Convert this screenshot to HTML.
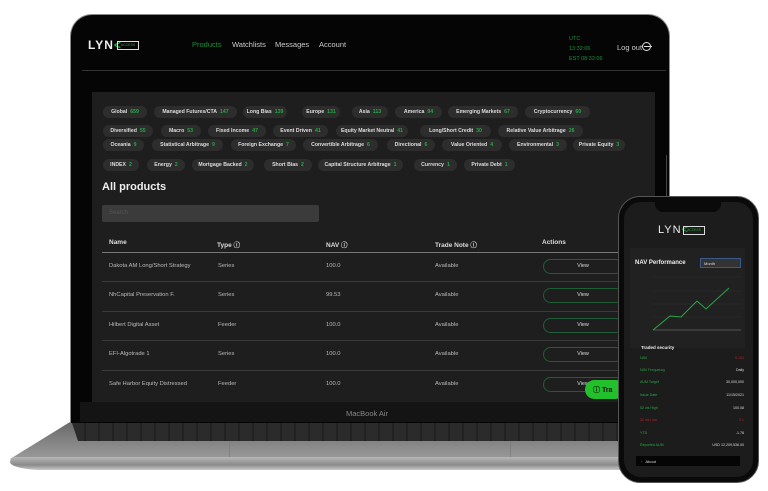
<!DOCTYPE html>
<html><head><meta charset="utf-8"><style>
*{box-sizing:border-box;margin:0;padding:0}
body{width:768px;height:491px;background:#fff;position:relative;overflow:hidden;font-family:"Liberation Sans",sans-serif}
.abs{position:absolute}
.lid{left:70px;top:14px;width:600px;height:409px;background:#050505;border-radius:22px 22px 0 0;border:1.5px solid #8a8a8a;border-bottom:none}
.chip{position:absolute;height:12px;border-radius:6px;background:#2d2d2d;color:#ddd;font-size:5.2px;font-weight:bold;line-height:12px;white-space:nowrap;text-align:center;overflow:hidden}
.chip b{color:#2aa845;margin-left:3px}
.nav{font-size:7.5px;color:#ccc}
.th{position:absolute;top:239px;font-size:6.5px;font-weight:bold;color:#ddd}
.td{position:absolute;font-size:5.8px;color:#bbb}
.row{position:absolute;left:102px;width:553px;height:1px;background:#3a3a3a}
.view{position:absolute;left:543px;width:80px;height:15px;border:1px solid #1f5e37;border-radius:8px;color:#ddd;font-size:5.5px;text-align:center;line-height:13px}
.pr{position:absolute;left:640px;font-size:3.6px;color:#2aa845}
.pv{position:absolute;right:24px;font-size:3.6px;color:#ddd}
</style></head><body>
<!-- base deck -->
<div class="abs" style="left:10px;top:422px;width:720px;height:37px;background:linear-gradient(#6a6a6a,#9a9a9a);clip-path:polygon(60px 0,660px 0,720px 37px,0 37px)"></div>
<div class="abs" style="left:72px;top:423px;width:596px;height:18px;background:repeating-linear-gradient(90deg,#2b2b2b 0 12px,#222 12px 14px);clip-path:polygon(0 0,596px 0,590px 18px,6px 18px)"></div>
<div class="abs" style="left:229px;top:441px;width:282px;height:17px;border-left:1px solid #777;border-right:1px solid #777;opacity:.6"></div>
<div class="abs" style="left:10px;top:457px;width:720px;height:13px;background:linear-gradient(#b8b8b8,#8a8a8a 60%,#c8c8c8);border-radius:6px 6px 40px 40px/6px 6px 10px 10px"></div>
<div class="abs lid"></div>
<!-- header -->
<div class="abs" style="left:88px;top:38px;font-size:12px;color:#eee;font-weight:bold;letter-spacing:1px">LYN<span style="color:#2aa845">&lt;</span></div>
<div class="abs" style="left:117px;top:41px;width:22px;height:9px;border:1px solid #ddd;font-size:3.5px;color:#2aa845;line-height:7px;text-align:center">ACCESS</div>
<div class="abs nav" style="left:192px;top:40px;color:#1f8f3a">Products</div>
<div class="abs nav" style="left:232px;top:40px">Watchlists</div>
<div class="abs nav" style="left:275px;top:40px">Messages</div>
<div class="abs nav" style="left:319px;top:40px">Account</div>
<div class="abs" style="left:569px;top:34px;font-size:5.5px;color:#1f8f3a;line-height:10px">UTC<br>13:32:06<br>EST 08:32:06</div>
<div class="abs" style="left:617px;top:43px;font-size:7.5px;color:#ccc">Log out</div>
<div class="abs" style="left:642px;top:42px;width:9px;height:9px;border:1.3px solid #ddd;border-radius:50%"></div>
<div class="abs" style="left:644px;top:46px;width:8px;height:1.3px;background:#ddd"></div>
<div class="abs" style="left:82px;top:70px;width:584px;height:1px;background:#333"></div>
<!-- panel -->
<div class="abs" style="left:92px;top:92px;width:563px;height:310px;background:#1e1e1e"></div>
<div class="abs" style="left:80px;top:402px;width:586px;height:20px;background:#141414"></div>
<div class="abs" style="left:346px;top:409px;font-size:7.5px;color:#888">MacBook Air</div>
<div class="abs" style="left:666px;top:155px;width:1px;height:80px;background:#444"></div>
<!-- row1 -->
<div class="chip" style="left:103px;top:106px;width:44px">Global<b>659</b></div>
<div class="chip" style="left:154px;top:106px;width:83px">Managed Futures/CTA<b>147</b></div>
<div class="chip" style="left:243px;top:106px;width:44px">Long Bias<b>139</b></div>
<div class="chip" style="left:302px;top:106px;width:38px">Europe<b>131</b></div>
<div class="chip" style="left:352px;top:106px;width:36px">Asia<b>113</b></div>
<div class="chip" style="left:395px;top:106px;width:47px">America<b>94</b></div>
<div class="chip" style="left:448px;top:106px;width:70px">Emerging Markets<b>67</b></div>
<div class="chip" style="left:525px;top:106px;width:65px">Cryptocurrency<b>60</b></div>
<!-- row2 -->
<div class="chip" style="left:103px;top:125px;width:50px">Diversified<b>55</b></div>
<div class="chip" style="left:161px;top:125px;width:40px">Macro<b>53</b></div>
<div class="chip" style="left:208px;top:125px;width:58px">Fixed Income<b>47</b></div>
<div class="chip" style="left:273px;top:125px;width:55px">Event Driven<b>41</b></div>
<div class="chip" style="left:336px;top:125px;width:72px">Equity Market Neutral<b>41</b></div>
<div class="chip" style="left:420px;top:125px;width:71px">Long/Short Credit<b>30</b></div>
<div class="chip" style="left:498px;top:125px;width:85px">Relative Value Arbitrage<b>26</b></div>
<!-- row3 -->
<div class="chip" style="left:103px;top:139px;width:41px">Oceania<b>9</b></div>
<div class="chip" style="left:152px;top:139px;width:71px">Statistical Arbitrage<b>9</b></div>
<div class="chip" style="left:231px;top:139px;width:65px">Foreign Exchange<b>7</b></div>
<div class="chip" style="left:303px;top:139px;width:75px">Convertible Arbitrage<b>6</b></div>
<div class="chip" style="left:387px;top:139px;width:48px">Directional<b>6</b></div>
<div class="chip" style="left:442px;top:139px;width:60px">Value Oriented<b>4</b></div>
<div class="chip" style="left:509px;top:139px;width:58px">Environmental<b>3</b></div>
<div class="chip" style="left:573px;top:139px;width:52px">Private Equity<b>3</b></div>
<!-- row4 -->
<div class="chip" style="left:103px;top:159px;width:36px">INDEX<b>2</b></div>
<div class="chip" style="left:147px;top:159px;width:38px">Energy<b>2</b></div>
<div class="chip" style="left:192px;top:159px;width:62px">Mortgage Backed<b>2</b></div>
<div class="chip" style="left:264px;top:159px;width:48px">Short Bias<b>2</b></div>
<div class="chip" style="left:318px;top:159px;width:85px">Capital Structure Arbitrage<b>1</b></div>
<div class="chip" style="left:414px;top:159px;width:43px">Currency<b>1</b></div>
<div class="chip" style="left:464px;top:159px;width:51px">Private Debt<b>1</b></div>
<div class="abs" style="left:102px;top:181px;font-size:11px;font-weight:bold;color:#eee">All products</div>
<div class="abs" style="left:102px;top:205px;width:217px;height:17px;background:#3b3b3b;border-radius:2px;font-size:6px;color:#555;padding:5px 7px">Search</div>
<div class="th" style="left:109px">Name</div>
<div class="th" style="left:217px">Type ⓘ</div>
<div class="th" style="left:326px">NAV ⓘ</div>
<div class="th" style="left:435px">Trade Note ⓘ</div>
<div class="th" style="left:542px">Actions</div>
<div class="row" style="top:252px;background:#777"></div>
<div class="row" style="top:281px"></div><div class="row" style="top:311px"></div><div class="row" style="top:340px"></div><div class="row" style="top:370px"></div>
<div class="td" style="left:109px;top:263px">Dakota AM Long/Short Strategy</div><div class="td" style="left:218px;top:263px">Series</div><div class="td" style="left:326px;top:263px">100.0</div><div class="td" style="left:435px;top:263px">Available</div>
<div class="td" style="left:109px;top:292px">NhCapital Preservation F.</div><div class="td" style="left:218px;top:292px">Series</div><div class="td" style="left:326px;top:292px">99.53</div><div class="td" style="left:435px;top:292px">Available</div>
<div class="td" style="left:109px;top:322px">Hilbert Digital Asset</div><div class="td" style="left:218px;top:322px">Feeder</div><div class="td" style="left:326px;top:322px">100.0</div><div class="td" style="left:435px;top:322px">Available</div>
<div class="td" style="left:109px;top:351px">EFI-Algotrade 1</div><div class="td" style="left:218px;top:351px">Series</div><div class="td" style="left:326px;top:351px">100.0</div><div class="td" style="left:435px;top:351px">Available</div>
<div class="td" style="left:109px;top:381px">Safe Harbor Equity Distressed</div><div class="td" style="left:218px;top:381px">Feeder</div><div class="td" style="left:326px;top:381px">100.0</div><div class="td" style="left:435px;top:381px">Available</div>
<div class="view" style="top:259px">View</div><div class="view" style="top:288px">View</div><div class="view" style="top:318px">View</div><div class="view" style="top:347px">View</div><div class="view" style="top:377px">View</div>
<div class="abs" style="left:585px;top:380px;width:40px;height:19px;background:#22c02a;border-radius:10px;color:#111;font-size:7px;font-weight:bold;padding:5px 0 0 8px">ⓘ Tra</div>
<!-- phone -->
<div class="abs" style="left:618px;top:196px;width:141px;height:287px;background:#0a0a0a;border-radius:22px;border:1px solid #555"></div>
<div class="abs" style="left:624px;top:202px;width:129px;height:275px;background:#1c1c1c;border-radius:17px"></div>
<div class="abs" style="left:655px;top:202px;width:66px;height:10px;background:#0a0a0a;border-radius:0 0 8px 8px"></div>
<div class="abs" style="left:658px;top:224px;font-size:11px;color:#eee;letter-spacing:1px">LYN<span style="color:#2aa845">&lt;</span></div>
<div class="abs" style="left:683px;top:226px;width:22px;height:9px;border:1px solid #ddd;font-size:3.3px;color:#2aa845;line-height:7px;text-align:center">ACCESS</div>
<div class="abs" style="left:630px;top:248px;width:115px;height:100px;background:#212121"></div>
<div class="abs" style="left:635px;top:260px;font-size:6px;font-weight:bold;color:#eee">NAV Performance</div>
<div class="abs" style="left:700px;top:258px;width:41px;height:10px;border:1px solid #3b5a8a;background:#333;font-size:4px;color:#ddd;padding:2px 3px">Month</div>
<svg class="abs" style="left:643px;top:273px" width="98" height="60"><g stroke="#333" stroke-width=".5"><line x1="10" y1="4" x2="98" y2="4"/><line x1="10" y1="18" x2="98" y2="18"/><line x1="10" y1="31" x2="98" y2="31"/><line x1="10" y1="44" x2="98" y2="44"/></g><line x1="10" y1="57" x2="98" y2="57" stroke="#555"/><polyline points="10,57 27,43 38,44 54,28 63,36 86,15" fill="none" stroke="#2aa845" stroke-width="1"/></svg>
<div class="abs" style="left:641px;top:345px;font-size:4.5px;font-weight:bold;color:#eee">Traded security</div>
<div class="pr" style="top:356px">NAV</div><div class="pv" style="top:356px;color:#b22">0.104</div>
<div class="pr" style="top:368px">NAV Frequency</div><div class="pv" style="top:368px">Daily</div>
<div class="pr" style="top:380px">AUM Target</div><div class="pv" style="top:380px">30,000,000</div>
<div class="pr" style="top:393px">Issue Date</div><div class="pv" style="top:393px">11/15/2021</div>
<div class="pr" style="top:406px">52 wk High</div><div class="pv" style="top:406px">100.08</div>
<div class="pr" style="top:418px;color:#b22">52 wk Low</div><div class="pv" style="top:418px;color:#b22">0.1</div>
<div class="pr" style="top:431px">YTD</div><div class="pv" style="top:431px">-1.78</div>
<div class="pr" style="top:443px">Reported AUM</div><div class="pv" style="top:443px">USD 12,209,536.00</div>
<div class="abs" style="left:636px;top:456px;width:104px;height:10px;background:#050505;font-size:4px;color:#ddd;padding:3px 5px"><span style="color:#2aa845">›</span>&nbsp;&nbsp; About</div>
</body></html>
